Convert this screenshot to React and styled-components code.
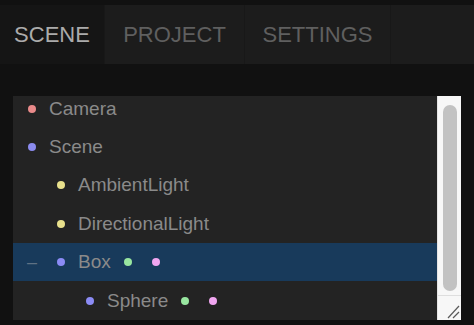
import styled, { createGlobalStyle } from 'styled-components'

const Global = createGlobalStyle`
  html, body {
    margin: 0;
    background: #111111;
    font-family: "Liberation Sans", Arial, sans-serif;
  }
`

const tabs = [
  { text: 'SCENE', width: 105, active: true },
  { text: 'PROJECT', width: 140 },
  { text: 'SETTINGS', width: 146 },
]

const nodes = [
  { name: 'Camera', color: '#e98a8a', level: 0 },
  { name: 'Scene', color: '#8b8bee', level: 0 },
  { name: 'AmbientLight', color: '#e8e08c', level: 1 },
  { name: 'DirectionalLight', color: '#e8e08c', level: 1 },
  { name: 'Box', color: '#8b8bf5', level: 1, toggle: true, selected: true, extras: ['#98e6a0', '#f0a6f0'] },
  { name: 'Sphere', color: '#8b8bf5', level: 2, extras: ['#98e6a0', '#f0a6f0'] },
]

const Page = styled.div`
  padding-top: 5px;
  height: 325px;
  box-sizing: border-box;
`

const TabBar = styled.div`
  display: flex;
  height: 59px;
  background: #1c1c1c;
`

const Tab = styled.div`
  width: ${p => p.$width}px;
  display: flex;
  align-items: center;
  justify-content: center;
  font-size: 22px;
  color: ${p => (p.$active ? '#ababab' : '#5f5f5f')};
  background: ${p => (p.$active ? '#151515' : 'transparent')};
  border-right: 1px solid #181818;
  box-sizing: border-box;
`

const Panel = styled.div`
  display: flex;
  margin: 32px 0 0 13px;
  width: 448px;
  height: 224px;
`

const Tree = styled.div`
  flex: 1;
  overflow: hidden;
  background: #232323;
`

const List = styled.div`
  margin-top: -6.6px;
`

const Row = styled.div`
  display: flex;
  align-items: center;
  height: 38.4px;
  padding-left: 15px;
  font-size: 19px;
  color: #8a8a8a;
  background: ${p => (p.$selected ? '#183a5b' : 'transparent')};
`

const Indent = styled.span`
  width: 29px;
  flex: none;
  display: flex;
  align-items: center;
`

const Toggle = styled.span`
  width: 8px;
  display: flex;
  justify-content: center;
  color: #5f7184;
  font-size: 18px;
`

const Dot = styled.span`
  width: 8px;
  height: 8px;
  border-radius: 50%;
  flex: none;
  background: ${p => p.$color};
  margin-right: 13px;
`

const Extra = styled(Dot)`
  margin-right: 0;
  margin-left: ${p => (p.$first ? 13 : 20)}px;
`

const Scrollbar = styled.div`
  width: 24px;
  display: flex;
  flex-direction: column;
  background: #f7f7f7;
  border-left: 1px solid #e4e4e4;
  box-sizing: border-box;
`

const Track = styled.div`
  flex: 1;
  padding: 9px 4px 4px 5px;
  display: flex;
`

const Thumb = styled.div`
  flex: 1;
  border-radius: 7px;
  background: #c2c2c2;
`

const Resizer = styled.div`
  height: 24px;
  border-top: 1px solid #dedede;
  display: flex;
  justify-content: flex-end;
  align-items: flex-end;
`

export default function App() {
  return (
    <Page>
      <Global />
      <TabBar>
        {tabs.map(t => (
          <Tab key={t.text} $width={t.width} $active={t.active}>{t.text}</Tab>
        ))}
      </TabBar>
      <Panel>
        <Tree>
          <List>
            {nodes.map(n => (
              <Row key={n.name} $selected={n.selected}>
                {Array.from({ length: n.level }).map((_, i) => (
                  <Indent key={i}>
                    {n.toggle && i === n.level - 1 && <Toggle>–</Toggle>}
                  </Indent>
                ))}
                <Dot $color={n.color} />
                <span>{n.name}</span>
                {(n.extras || []).map((c, i) => (
                  <Extra key={i} $color={c} $first={i === 0} />
                ))}
              </Row>
            ))}
          </List>
        </Tree>
        <Scrollbar>
          <Track>
            <Thumb />
          </Track>
          <Resizer>
            <svg width="14" height="16" viewBox="0 0 14 16">
              <line x1="1" y1="14" x2="12" y2="2" stroke="#5a5a5a" strokeWidth="1.2" />
              <line x1="6" y1="14" x2="12" y2="8" stroke="#5a5a5a" strokeWidth="1.2" />
            </svg>
          </Resizer>
        </Scrollbar>
      </Panel>
    </Page>
  )
}
